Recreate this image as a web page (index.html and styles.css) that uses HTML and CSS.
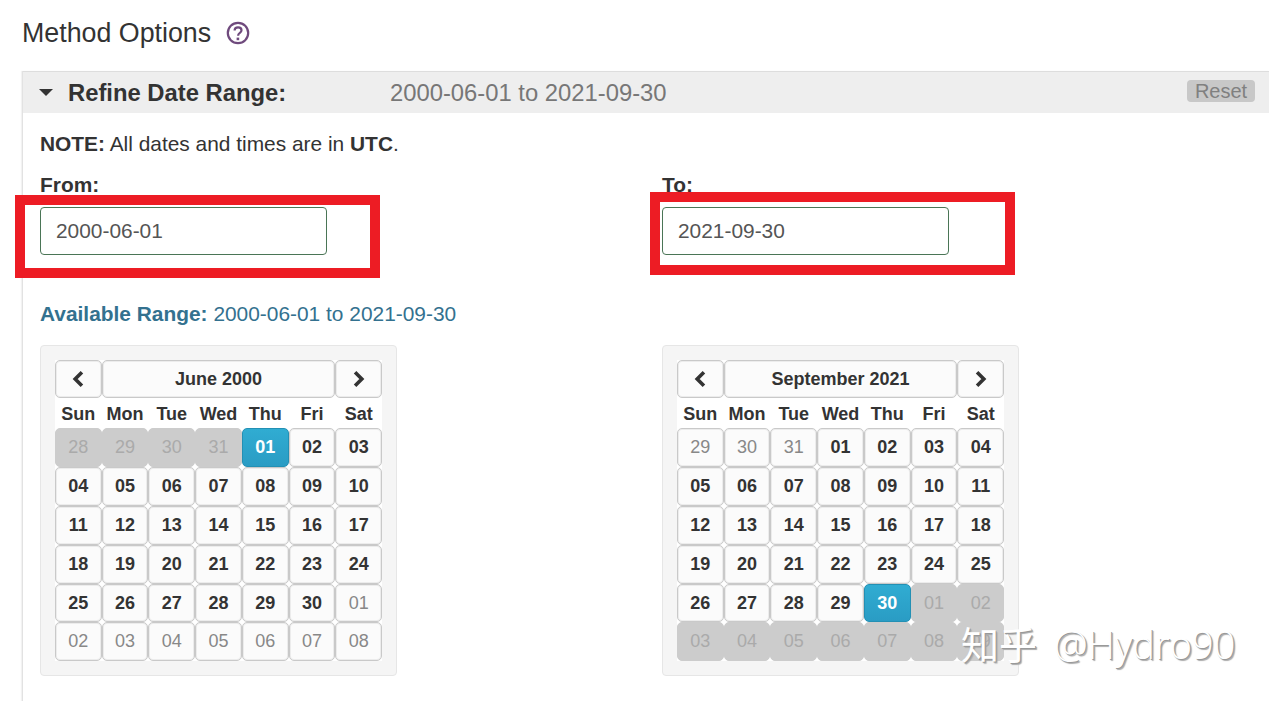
FILE: index.html
```html
<!DOCTYPE html>
<html lang="en">
<head>
    <meta charset="UTF-8">
    <title>Method Options</title>
    <link rel="stylesheet" href="styles.css">
</head>
<body>
    <div class="page">
        <h2 class="page-title">
            Method Options
            <svg class="help-icon" viewBox="0 0 24 24" width="24" height="24">
                <circle cx="12" cy="12" r="10.2" fill="none" stroke="#6f4a7d" stroke-width="2.2"/>
                <path d="M8.6 9.6c0-2 1.5-3.3 3.5-3.3s3.4 1.2 3.4 3c0 1.5-.9 2.2-1.9 2.9-.9.6-1.4 1.1-1.4 2.1v.5" fill="none" stroke="#6f4a7d" stroke-width="2.2"/>
                <rect x="10.6" y="16.6" width="2.6" height="2.6" fill="#6f4a7d"/>
            </svg>
        </h2>

        <div class="panel">
            <div class="panel-header">
                <span class="caret"></span>
                <span class="panel-title">Refine Date Range:</span>
                <span class="panel-range">2000-06-01 to 2021-09-30</span>
                <span class="reset">Reset</span>
            </div>
            <div class="panel-body">
                <p class="note"><b>NOTE:</b> All dates and times are in <b>UTC</b>.</p>
                <div class="fields">
                    <div class="field">
                        <label for="from">From:</label>
                        <input type="text" id="from" value="2000-06-01">
                    </div>
                    <div class="field">
                        <label for="to">To:</label>
                        <input type="text" id="to" value="2021-09-30">
                    </div>
                </div>
                <p class="available"><b>Available Range:</b> 2000-06-01 to 2021-09-30</p>
                <div class="calendars">
                    <div class="well">
                        <div class="cal">
                            <span class="nav"><svg class="chev" viewBox="0 0 12 16"><path d="M9.5 2 3.5 8l6 6"/></svg></span>
                            <span class="nav month">June 2000</span>
                            <span class="nav"><svg class="chev" viewBox="0 0 12 16"><path d="M2.5 2l6 6-6 6"/></svg></span>
                            <span class="dow">Sun</span><span class="dow">Mon</span><span class="dow">Tue</span><span class="dow">Wed</span><span class="dow">Thu</span><span class="dow">Fri</span><span class="dow">Sat</span>
                            <span class="day off">28</span><span class="day off">29</span><span class="day off">30</span><span class="day off">31</span><span class="day active">01</span><span class="day">02</span><span class="day">03</span>
                            <span class="day">04</span><span class="day">05</span><span class="day">06</span><span class="day">07</span><span class="day">08</span><span class="day">09</span><span class="day">10</span>
                            <span class="day">11</span><span class="day">12</span><span class="day">13</span><span class="day">14</span><span class="day">15</span><span class="day">16</span><span class="day">17</span>
                            <span class="day">18</span><span class="day">19</span><span class="day">20</span><span class="day">21</span><span class="day">22</span><span class="day">23</span><span class="day">24</span>
                            <span class="day">25</span><span class="day">26</span><span class="day">27</span><span class="day">28</span><span class="day">29</span><span class="day">30</span><span class="day old">01</span>
                            <span class="day old">02</span><span class="day old">03</span><span class="day old">04</span><span class="day old">05</span><span class="day old">06</span><span class="day old">07</span><span class="day old">08</span>
                        </div>
                    </div>
                    <div class="well">
                        <div class="cal">
                            <span class="nav"><svg class="chev" viewBox="0 0 12 16"><path d="M9.5 2 3.5 8l6 6"/></svg></span>
                            <span class="nav month">September 2021</span>
                            <span class="nav"><svg class="chev" viewBox="0 0 12 16"><path d="M2.5 2l6 6-6 6"/></svg></span>
                            <span class="dow">Sun</span><span class="dow">Mon</span><span class="dow">Tue</span><span class="dow">Wed</span><span class="dow">Thu</span><span class="dow">Fri</span><span class="dow">Sat</span>
                            <span class="day old">29</span><span class="day old">30</span><span class="day old">31</span><span class="day">01</span><span class="day">02</span><span class="day">03</span><span class="day">04</span>
                            <span class="day">05</span><span class="day">06</span><span class="day">07</span><span class="day">08</span><span class="day">09</span><span class="day">10</span><span class="day">11</span>
                            <span class="day">12</span><span class="day">13</span><span class="day">14</span><span class="day">15</span><span class="day">16</span><span class="day">17</span><span class="day">18</span>
                            <span class="day">19</span><span class="day">20</span><span class="day">21</span><span class="day">22</span><span class="day">23</span><span class="day">24</span><span class="day">25</span>
                            <span class="day">26</span><span class="day">27</span><span class="day">28</span><span class="day">29</span><span class="day active">30</span><span class="day off">01</span><span class="day off">02</span>
                            <span class="day off">03</span><span class="day off">04</span><span class="day off">05</span><span class="day off">06</span><span class="day off">07</span><span class="day off">08</span><span class="day off">09</span>
                        </div>
                    </div>
                </div>
            </div>
        </div>

        <!-- annotations on top of the screenshot -->
        <div class="mark mark-from"></div>
        <div class="mark mark-to"></div>
        <div class="watermark"><span class="wm-cn">知乎</span> @Hydro90</div>
    </div>
</body>
</html>
```

FILE: styles.css
```css
html, body {
    margin: 0;
    padding: 0;
    background: #fff;
}
.page {
    position: relative;
    width: 1269px;
    height: 701px;
    overflow: hidden;
    font-family: "Liberation Sans", Arial, sans-serif;
    color: #333;
}
.page-title {
    display: flex;
    align-items: center;
    gap: 15px;
    height: 30px;
    margin: 0;
    padding: 18px 0 23px 22px;
    font-size: 26.8px;
    font-weight: normal;
}
.help-icon {
    display: block;
    margin-top: -1px;
}
.panel {
    margin-left: 22px;
    border-left: 1px solid #e2e2e2;
    height: 640px;
    box-shadow: -1px 0 1px #f2f2f2;
}
.panel-header {
    position: relative;
    display: flex;
    align-items: center;
    height: 41px;
    background: #eee;
    border-top: 1px solid #ddd;
}
.caret {
    width: 0;
    height: 0;
    margin-left: 16px;
    border-left: 7px solid transparent;
    border-right: 7px solid transparent;
    border-top: 7px solid #333;
}
.panel-title {
    width: 322px;
    margin-left: 15px;
    font-size: 23.8px;
    font-weight: bold;
}
.panel-range {
    font-size: 23.8px;
    color: #777;
}
.reset {
    position: absolute;
    left: 1164px;
    top: 8px;
    width: 68px;
    height: 22px;
    line-height: 22px;
    text-align: center;
    background: #c8c8c8;
    border-radius: 4px;
    font-size: 20px;
    color: #808080;
}
.panel-body {
    padding: 0 0 0 17px;
}
.note {
    height: 23px;
    margin: 0;
    padding-top: 19px;
    font-size: 20.9px;
    line-height: 23px;
}
.fields {
    display: grid;
    grid-template-columns: 622px 287px;
    margin-top: 18px;
}
.field label {
    display: block;
    height: 23px;
    line-height: 23px;
    font-size: 20.9px;
    font-weight: bold;
}
.field input {
    display: block;
    box-sizing: border-box;
    width: 287px;
    height: 48px;
    margin-top: 11px;
    padding: 0 15px;
    border: 1px solid #4a7556;
    border-radius: 4px;
    background: #fff;
    font-family: inherit;
    font-size: 20.9px;
    color: #555;
}
.available {
    height: 23px;
    margin: 47px 0 0;
    font-size: 20.9px;
    line-height: 23px;
    color: #33718f;
}
.calendars {
    display: grid;
    grid-template-columns: 622px 357px;
    margin-top: 20px;
}
.well {
    box-sizing: border-box;
    width: 357px;
    height: 331px;
    padding: 14px;
    background: #f5f5f5;
    border: 1px solid #e6e6e6;
    border-radius: 4px;
}
.cal {
    display: grid;
    grid-template-columns: repeat(7, 1fr);
    grid-template-rows: 38px 30px repeat(6, 38.9px);
    width: 327px;
    background: #fff;
    font-size: 18px;
    text-align: center;
}
.nav, .day {
    display: flex;
    align-items: center;
    justify-content: center;
    box-sizing: border-box;
    border: 1px solid #c9c9c9;
    box-shadow: inset 0 0 0 1px #ececec;
    border-radius: 5px;
    background: #fbfbfb;
    font-weight: bold;
}
.month {
    grid-column: span 5;
}
.chev {
    width: 14px;
    height: 18px;
    fill: none;
    stroke: #333;
    stroke-width: 3.2;
}
.dow {
    line-height: 32px;
    font-weight: bold;
}
.day.old {
    font-weight: normal;
    color: #888;
}
.day.off {
    border-color: #ccc;
    box-shadow: none;
    background: #ccc;
    font-weight: normal;
    color: #aaa;
}
.day.active {
    border-color: #2390b4;
    box-shadow: none;
    background: linear-gradient(#30acd2, #2a9cc4);
    color: #fff;
}
.mark {
    position: absolute;
    box-sizing: border-box;
    width: 365px;
    height: 83px;
    border: 10px solid #ed1c24;
}
.mark-from {
    left: 15px;
    top: 195px;
}
.mark-to {
    left: 650px;
    top: 192px;
}
.watermark {
    position: absolute;
    left: 961px;
    top: 617px;
    font-family: "Open Sans", "Noto Sans CJK SC", sans-serif;
    font-size: 38px;
    font-weight: 300;
    line-height: 52px;
    white-space: nowrap;
    color: #fff;
    text-shadow: 1px 1px 0 #999, 2px 2px 1px #aaa;
}
.wm-cn {
    margin-right: 7px;
    font-family: "Noto Sans CJK SC", sans-serif;
    font-weight: 400;
}
```
